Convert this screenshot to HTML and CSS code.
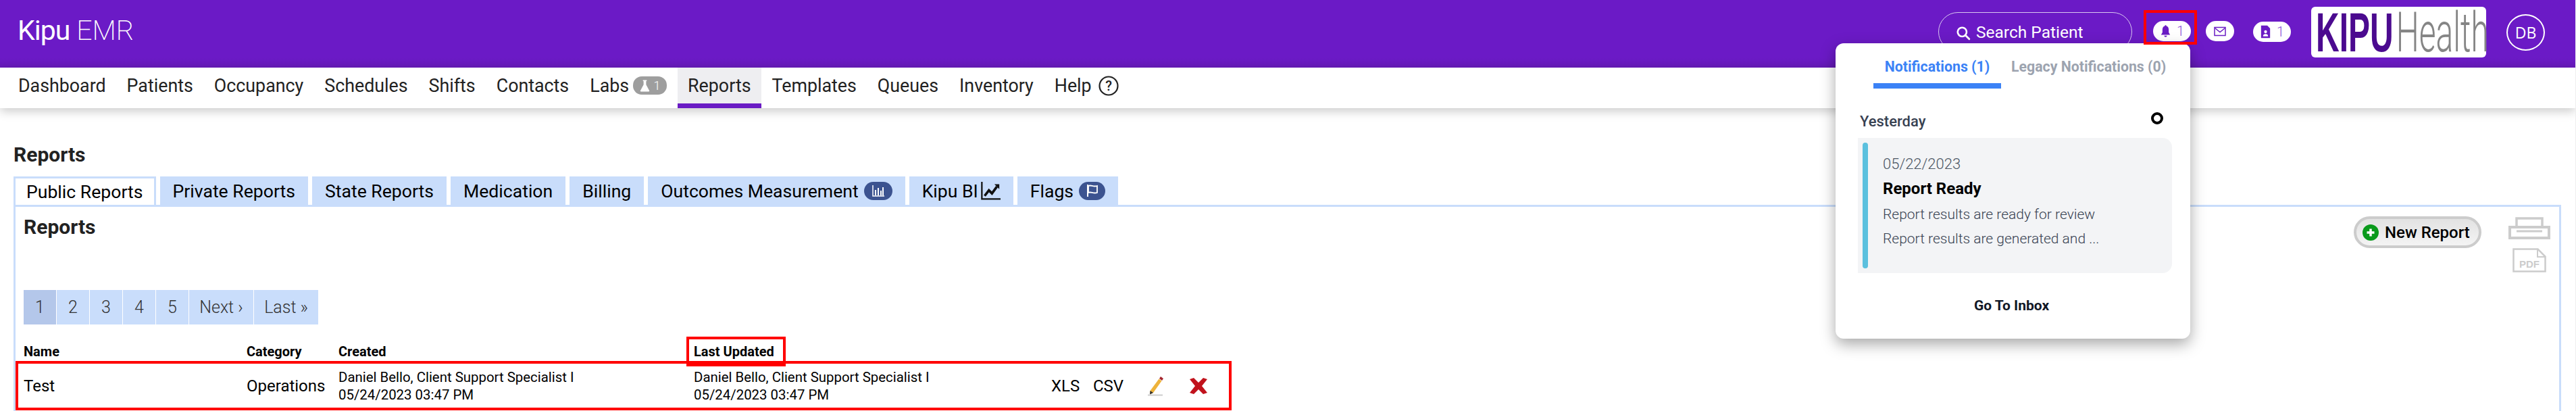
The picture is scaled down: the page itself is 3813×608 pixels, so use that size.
FILE: index.html
```html
<!DOCTYPE html>
<html lang="en">
<head>
    <meta charset="UTF-8">
    <title>Kipu EMR - Reports</title>
    <link rel="stylesheet" href="styles.css">
</head>
<body>
<div class="page">
    <!-- Top bar -->
    <header class="topbar">
        <div class="brand"><b>Kipu</b> EMR</div>
        <div class="topbar-right">
            <div class="search-pill">
                <svg class="search-icon" viewBox="0 0 20 20"><circle cx="8.5" cy="8.5" r="6" fill="none" stroke="#fff" stroke-width="2.4"/><path d="M13 13l5 5" stroke="#fff" stroke-width="2.6" stroke-linecap="round"/></svg>
                <span>Search Patient</span>
            </div>
            <div class="count-pill bell-pill">
                <svg class="pill-icon" viewBox="0 0 20 24"><path d="M10 1.5a1.5 1.5 0 0 1 1.5 1.6C14.5 4 15.6 6.6 15.6 10v4.5L18 18.5H2l2.4-4V10C4.400 6.600 5.500 4 8.500 3.100A1.500 1.500 0 0 1 10 1.500z" fill="#6a1bc4"/><path d="M7.500 20h5a2.500 2.500 0 0 1-5 0z" fill="#6a1bc4"/></svg>
                <span class="pill-count">1</span>
            </div>
            <div class="count-pill mail-pill">
                <svg class="mail-icon" viewBox="0 0 18 14"><rect x="1" y="1" width="16" height="12" fill="none" stroke="#6a1bc4" stroke-width="1.500"/><path d="M1.500 2l7.500 6 7.500-6" fill="none" stroke="#6a1bc4" stroke-width="1.500"/></svg>
            </div>
            <div class="count-pill doc-pill">
                <svg class="pill-icon" viewBox="0 0 20 24"><path d="M2 1h11l5 5v17H2z" fill="#6a1bc4"/><circle cx="10" cy="12" r="2.600" fill="#fff"/><path d="M5.500 20c0-3 2-4.200 4.500-4.200s4.500 1.200 4.500 4.200z" fill="#fff"/></svg>
                <span class="pill-count">1</span>
            </div>
            <div class="logo-box">
                <span class="logo-kipu">KIPU</span>
                <span class="logo-health">Health</span>
            </div>
            <div class="avatar">DB</div>
        </div>
    </header>

    <!-- Main menu -->
    <nav class="mainnav">
        <a class="nav-item">Dashboard</a>
        <a class="nav-item">Patients</a>
        <a class="nav-item">Occupancy</a>
        <a class="nav-item">Schedules</a>
        <a class="nav-item">Shifts</a>
        <a class="nav-item">Contacts</a>
        <a class="nav-item">Labs
            <span class="labs-badge">
                <svg class="flask-icon" viewBox="0 0 16 20"><path d="M5 1h6v1.500h-1V8l5 9.500a1 1 0 0 1-1 1.500H2a1 1 0 0 1-1-1.500L6 8V2.500H5z" fill="#fff"/></svg>
                <span>1</span>
            </span>
        </a>
        <a class="nav-item active">Reports</a>
        <a class="nav-item">Templates</a>
        <a class="nav-item">Queues</a>
        <a class="nav-item">Inventory</a>
        <a class="nav-item">Help
            <svg class="help-icon" viewBox="0 0 30 30"><circle cx="15" cy="15" r="13.500" fill="none" stroke="#222" stroke-width="2.200"/><text x="15" y="22" text-anchor="middle" class="help-mark">?</text></svg>
        </a>
    </nav>

    <main class="content">
        <h1 class="page-title">Reports</h1>

        <div class="tabs">
            <a class="tab active">Public Reports</a>
            <a class="tab">Private Reports</a>
            <a class="tab">State Reports</a>
            <a class="tab">Medication</a>
            <a class="tab">Billing</a>
            <a class="tab">Outcomes Measurement
                <span class="tab-badge">
                    <svg viewBox="0 0 20 20"><path d="M2 2v16h17" fill="none" stroke="#fff" stroke-width="1.500"/><path d="M5 9h2v8H5zM9 6h2v11H9zM13 10h2v7h-2zM16 5h2v12h-2z" fill="#fff"/></svg>
                </span>
            </a>
            <a class="tab">Kipu BI
                <svg class="trend-icon" viewBox="0 0 32 30"><path d="M1.500 0v28H32" fill="none" stroke="#111" stroke-width="2.500"/><path d="M6 23l7-9 5 5 8-11" fill="none" stroke="#111" stroke-width="4"/><path d="M22 4h8v8z" fill="#111"/></svg>
            </a>
            <a class="tab">Flags
                <span class="tab-badge flag-badge">
                    <svg viewBox="0 0 20 20"><path d="M3 1v18" stroke="#fff" stroke-width="2"/><path d="M4 3c4-2 7 2 13 0v10c-6 2-9-2-13 0z" fill="none" stroke="#fff" stroke-width="1.800"/></svg>
                </span>
            </a>
        </div>

        <section class="panel">
            <div class="panel-head">
                <h2 class="panel-title">Reports</h2>
                <div class="panel-actions">
                    <a class="new-report">
                        <svg class="plus-icon" viewBox="0 0 24 24"><circle cx="12" cy="12" r="12" fill="#0a9a1c"/><path d="M12 6.500v11M6.500 12h11" stroke="#fff" stroke-width="3.500"/></svg>
                        New Report
                    </a>
                    <div class="export-icons">
                        <svg class="print-icon" viewBox="0 0 62 33"><path d="M12 15V2h38v13" fill="none" stroke="#ccc" stroke-width="3.500"/><path d="M2 15h58v16H2z" fill="none" stroke="#ccc" stroke-width="4"/><path d="M12 21h38" stroke="#ccc" stroke-width="3"/></svg>
                        <svg class="pdf-icon" viewBox="0 0 50 36"><path d="M1.500 1.500h36l11 11v22h-47z" fill="none" stroke="#ccc" stroke-width="2.500"/><path d="M37 2v11h11" fill="none" stroke="#ccc" stroke-width="2"/><text x="25" y="29" text-anchor="middle" class="pdf-label">PDF</text></svg>
                    </div>
                </div>
            </div>

            <div class="pager">
                <a class="page-link current">1</a>
                <a class="page-link">2</a>
                <a class="page-link">3</a>
                <a class="page-link">4</a>
                <a class="page-link">5</a>
                <a class="page-link wide">Next ›</a>
                <a class="page-link wide">Last »</a>
            </div>

            <div class="report-grid report-header">
                <div>Name</div>
                <div>Category</div>
                <div>Created</div>
                <div class="last-updated">Last Updated</div>
            </div>
            <div class="report-grid report-row">
                <div class="cell-big">Test</div>
                <div class="cell-big">Operations</div>
                <div class="cell-small">Daniel Bello, Client Support Specialist I<br>05/24/2023 03:47 PM</div>
                <div class="cell-small">Daniel Bello, Client Support Specialist I<br>05/24/2023 03:47 PM</div>
                <div class="cell-export">XLS</div>
                <div class="cell-export">CSV</div>
                <div>
                    <svg class="edit-icon" viewBox="0 0 26 30"><path d="M21 1l4 3-2 3-4-3z" fill="#a5262e"/><path d="M18.500 4.500l4 3L10 25l-5 2.500 .5-5.500z" fill="#eeb33a"/><path d="M5.500 22l4.500 3-5 2.500z" fill="#333"/><path d="M2 28.500h22" stroke="#ccc" stroke-width="2"/></svg>
                </div>
                <div>
                    <svg class="delete-icon" viewBox="0 0 33 26"><path d="M4 3l6-2 7 7 7-7 6 2-8 10 8 10-6 2-7-7-7 7-6-2 8-10z" fill="#c1121c"/></svg>
                </div>
            </div>
        </section>
    </main>

    <!-- Notifications dropdown -->
    <div class="notif-popup">
        <div class="notif-tabs">
            <a class="notif-tab active">Notifications (1)</a>
            <a class="notif-tab">Legacy Notifications (0)</a>
        </div>
        <div class="notif-day">
            <span>Yesterday</span>
            <svg class="day-icon" viewBox="0 0 18 18"><circle cx="9" cy="9" r="7" fill="#fff" stroke="#000" stroke-width="4"/></svg>
        </div>
        <div class="notif-card">
            <div class="notif-date">05/22/2023</div>
            <div class="notif-title">Report Ready</div>
            <div class="notif-text">Report results are ready for review</div>
            <div class="notif-text">Report results are generated and ...</div>
        </div>
        <a class="notif-inbox">Go To Inbox</a>
    </div>
</div>
</body>
</html>
```

FILE: styles.css
```css
html, body {
    margin: 0;
    padding: 0;
    height: 100%;
    overflow: hidden;
    background-color: #fff;
}

body {
    font-family: Roboto, "Liberation Sans", sans-serif;
    color: #222;
}

.page {
    position: relative;
    width: 3813px;
    height: 608px;
    overflow: hidden;
    box-sizing: border-box;
    border-right: 1px solid #eee;
}

/* Top bar */
.topbar {
    height: 100px;
    background: linear-gradient(#6b1ac6 85%, #661ab8);
    display: flex;
    justify-content: space-between;
    color: #fff;
}

.brand {
    margin: 22px 0 0 26px;
    font-size: 41px;
    line-height: 46px;
    font-weight: 200;
}

.brand b {
    font-weight: 400;
    letter-spacing: -1px;
}

.topbar-right {
    display: flex;
    align-items: flex-start;
    padding-right: 45px;
}

.search-pill {
    width: 287px;
    height: 58px;
    margin: 18px 31px 0 0;
    box-sizing: border-box;
    border: 1px solid #d8c6f0;
    border-radius: 30px;
    padding: 12px 0 0 25px;
    display: flex;
    gap: 8px;
    font-size: 24.500px;
    line-height: 34px;
    font-weight: 400;
}

.search-icon {
    width: 22px;
    height: 24px;
    margin-top: 6px;
}

.count-pill {
    position: relative;
    height: 30px;
    margin-top: 31px;
    background-color: #fff;
    border-radius: 15px;
    display: flex;
    align-items: center;
    justify-content: center;
    gap: 8px;
    color: #8a50d6;
}

.bell-pill {
    width: 56px;
    margin-right: 22px;
}

/* red annotation round the bell */
.bell-pill::after {
    content: "";
    position: absolute;
    top: -16px;
    right: -9px;
    bottom: -5px;
    left: -14px;
    border: 4px solid #f00;
    z-index: 20;
}

.mail-pill {
    width: 42px;
    margin-right: 28px;
}

.doc-pill {
    width: 56px;
    margin-top: 32px;
    margin-right: 30px;
}

.pill-icon {
    width: 17px;
    height: 20px;
}

.mail-icon {
    width: 18px;
    height: 15px;
}

.pill-count {
    font-size: 20px;
    font-weight: 300;
}

/* logo is a tall, narrow wordmark */
.logo-box {
    width: 259px;
    height: 75px;
    margin-top: 10px;
    margin-right: 30px;
    box-sizing: border-box;
    padding-left: 7px;
    background-color: #fff;
    border-radius: 6px;
    display: flex;
    gap: 4px;
    line-height: 75px;
    white-space: nowrap;
}

.logo-kipu {
    font-family: "Liberation Sans", sans-serif;
    font-size: 48px;
    font-weight: 700;
    color: #4b0a8f;
    transform: scaleY(1.710);
}

.logo-health {
    font-size: 48px;
    font-weight: 300;
    color: #858585;
    transform: scaleY(1.710);
}

.avatar {
    width: 57px;
    height: 54px;
    margin-top: 21px;
    box-sizing: border-box;
    border: 2px solid #fff;
    border-radius: 50%;
    text-align: center;
    font-family: "Open Sans", sans-serif;
    font-size: 23px;
    line-height: 50px;
}

/* Main menu */
.mainnav {
    height: 60px;
    padding-left: 11.500px;
    display: flex;
    background-color: #fff;
    box-shadow: 0 5px 14px rgba(0, 0, 0, 0.2);
    position: relative;
}

.nav-item {
    height: 60px;
    box-sizing: border-box;
    padding: 0 15.500px;
    border-bottom: 7px solid transparent;
    display: flex;
    align-items: center;
    gap: 6px;
    font-size: 26.800px;
    color: #222;
}

.nav-item.active {
    background-color: #eeeef1;
    border-bottom-color: #6a1bc4;
}

.labs-badge {
    width: 50px;
    height: 27px;
    background-color: #9e9e9e;
    border-radius: 13px;
    display: flex;
    align-items: center;
    justify-content: center;
    gap: 6px;
    color: #fff;
    font-size: 18px;
    font-weight: 300;
}

.flask-icon {
    width: 15px;
    height: 20px;
}

.help-icon {
    width: 30px;
    height: 30px;
    margin-left: 4px;
}

.help-mark {
    font-size: 20px;
    font-weight: 500;
    fill: #222;
}

/* Page content */
.content {
    padding: 51px 0 0 20px;
}

.page-title {
    margin: 0 0 14px;
    font-size: 30px;
    line-height: 36px;
    font-weight: 700;
    color: #222;
}

.tabs {
    display: flex;
    gap: 6px;
    height: 42px;
}

.tab {
    box-sizing: border-box;
    height: 42px;
    padding: 0 19px;
    background-color: #c9ddfb;
    display: flex;
    align-items: center;
    gap: 8px;
    font-size: 26.600px;
    color: #000;
}

.tab.active {
    background-color: #fff;
    border: 3px solid #c9ddfb;
    border-bottom: 0;
    padding: 0 16px;
}

.tab-badge {
    width: 42px;
    height: 27px;
    background-color: #3c5390;
    border-radius: 14px;
    display: flex;
    align-items: center;
    justify-content: center;
}

.tab-badge svg {
    width: 20px;
    height: 20px;
}

.flag-badge {
    width: 39px;
}

.trend-icon {
    width: 29px;
    height: 29px;
    margin-left: -4px;
}

.panel {
    width: 3771px;
    height: 400px;
    box-sizing: border-box;
    border: 3px solid #c9ddfb;
    background-color: #fff;
}

.panel-head {
    height: 123px;
    box-sizing: border-box;
    padding: 12px 13px 0 12px;
    display: flex;
    justify-content: space-between;
    align-items: flex-start;
}

.panel-title {
    margin: 0;
    font-size: 30px;
    line-height: 36px;
    font-weight: 700;
    color: #222;
}

.panel-actions {
    display: flex;
    align-items: flex-start;
    gap: 40px;
}

.new-report {
    width: 189px;
    height: 47px;
    margin-top: 2px;
    box-sizing: border-box;
    border: 4px solid #ccc;
    border-radius: 24px;
    background: linear-gradient(#e2e2e2, #f4f4f4);
    display: flex;
    align-items: center;
    gap: 9px;
    padding-left: 9px;
    font-size: 24px;
    font-weight: 500;
    color: #000;
    white-space: nowrap;
}

.plus-icon {
    width: 24px;
    height: 24px;
    flex: none;
}

.export-icons {
    width: 62px;
    display: flex;
    flex-direction: column;
    align-items: center;
    gap: 13px;
    padding-top: 3px;
}

.print-icon {
    width: 62px;
    height: 33px;
}

.pdf-icon {
    width: 50px;
    height: 36px;
}

.pdf-label {
    font-family: "Liberation Sans", sans-serif;
    font-size: 15px;
    font-weight: 700;
    fill: #ccc;
}

.pager {
    display: flex;
    gap: 1px;
    margin-left: 12px;
}

.page-link {
    width: 48px;
    height: 51px;
    background-color: #c9ddfb;
    text-align: center;
    font-size: 25px;
    line-height: 51px;
    font-weight: 300;
    color: #333;
}

.page-link.current {
    background-color: #b4c7ea;
}

.page-link.wide {
    width: 95px;
}

/* Report table */
.report-grid {
    display: grid;
    grid-template-columns: 330px 136px 526px 529px 62px 79px 60px 60px;
    padding-left: 8px;
}

.report-header {
    margin-top: 26px;
    font-size: 20px;
    line-height: 28px;
    font-weight: 700;
    color: #000;
    padding-left: 12px;
}

.last-updated {
    position: relative;
}

/* red annotation round the column head */
.last-updated::after {
    content: "";
    position: absolute;
    top: -8px;
    left: -11px;
    width: 147px;
    height: 44px;
    box-sizing: border-box;
    border: 4px solid #f00;
}

.report-row {
    width: 1800px;
    height: 73px;
    box-sizing: border-box;
    border: 4px solid #f00;
    align-items: center;
    color: #000;
}

.cell-big {
    font-size: 24px;
}

.cell-small {
    font-size: 20.400px;
    line-height: 26px;
    margin-top: 1px;
}

.cell-export {
    font-size: 24px;
}

.edit-icon {
    display: block;
    width: 26px;
    height: 30px;
}

.delete-icon {
    display: block;
    width: 33px;
    height: 26px;
}

/* Notifications dropdown */
.notif-popup {
    position: absolute;
    top: 64px;
    left: 2717px;
    width: 525px;
    height: 437px;
    box-sizing: border-box;
    background-color: #fff;
    border-radius: 12px;
    box-shadow: 0 8px 22px rgba(0, 0, 0, 0.35);
    z-index: 10;
}

.notif-tabs {
    display: flex;
    gap: 15px;
    padding: 0 0 0 56px;
    height: 67px;
}

.notif-tab {
    box-sizing: border-box;
    height: 67px;
    padding-top: 18px;
    font-size: 21.300px;
    line-height: 34px;
    font-weight: 700;
    color: #9ca3af;
    white-space: nowrap;
}

.notif-tab.active {
    width: 189px;
    text-align: center;
    color: #3b82f6;
    border-bottom: 8px solid #3b82f6;
}

.notif-day {
    display: flex;
    justify-content: space-between;
    padding: 32px 40px 0 36px;
    height: 73px;
    box-sizing: border-box;
    font-size: 22px;
    line-height: 34px;
    font-weight: 500;
    color: #374151;
}

.day-icon {
    width: 18px;
    height: 18px;
    margin-top: 3px;
}

.notif-card {
    width: 465px;
    height: 200px;
    margin-left: 33px;
    box-sizing: border-box;
    padding: 24px 0 0 37px;
    background-color: #f3f4f6;
    border-radius: 0 14px 14px 0;
    position: relative;
}

.notif-card::before {
    content: "";
    position: absolute;
    top: 7px;
    bottom: 7px;
    left: 7px;
    width: 8px;
    border-radius: 4px;
    background-color: #5bc0de;
}

.notif-date {
    font-size: 22px;
    line-height: 30px;
    font-weight: 300;
    color: #4b5563;
}

.notif-title {
    margin-top: 4px;
    font-size: 24px;
    line-height: 34px;
    font-weight: 700;
    color: #000;
}

.notif-text {
    margin-top: 6px;
    font-size: 21px;
    line-height: 30px;
    font-weight: 300;
    color: #374151;
}

.notif-inbox {
    display: block;
    margin-top: 33px;
    padding-right: 4px;
    text-align: center;
    font-size: 21px;
    line-height: 30px;
    font-weight: 700;
    color: #111827;
}
```
